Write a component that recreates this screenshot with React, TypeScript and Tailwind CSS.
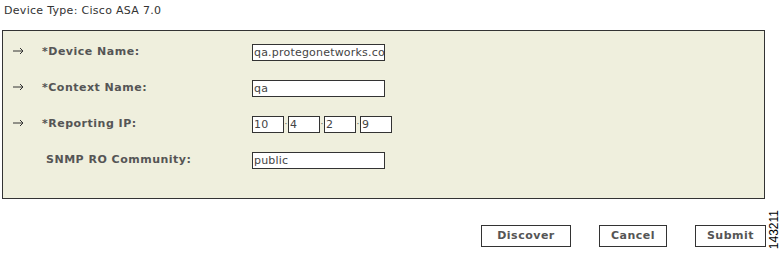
import React from "react";

const FONT = { fontFamily: '"DejaVu Sans", Verdana, sans-serif' };

function Arrow() {
  return (
    <svg width="11" height="8" viewBox="0 0 11 8" className="-mt-[3px]">
      <path d="M0 4H10M7 1L10 4L7 7" fill="none" stroke="#333" strokeWidth="1" />
    </svg>
  );
}

function Field({ value, w = "w-[133px]" }: { value: string; w?: string }) {
  return (
    <div
      className={`${w} h-[17px] border border-[#333] bg-white text-[11px] leading-[15px] pl-[1px] text-[#444] tracking-[0.2px] overflow-hidden whitespace-nowrap`}
    >
      {value}
    </div>
  );
}

function Row({
  arrow,
  label,
  children,
}: {
  arrow: boolean;
  label: string;
  children: React.ReactNode;
}) {
  return (
    <div className="flex items-center h-[17px]">
      <div className="w-[39px] pl-[10px] flex items-center">{arrow && <Arrow />}</div>
      <div
        className={`w-[210px] text-[11px] font-bold text-[#555] tracking-[0.5px] ${
          arrow ? "" : "pl-[4px]"
        }`}
      >
        {label}
      </div>
      {children}
    </div>
  );
}

export default function App() {
  const ip = ["10", "4", "2", "9"];
  return (
    <div className="relative w-[780px] h-[260px] bg-white" style={FONT}>
      <div className="pl-[4px] pt-[3px] h-[30px] text-[11px] text-[#333] tracking-[0.3px]">
        Device Type: Cisco ASA 7.0
      </div>

      <div className="ml-[2px] w-[763px] h-[169px] border border-[#333] bg-[#efefdd] pt-[13px] flex flex-col gap-[19px]">
        <Row arrow label="*Device Name:">
          <Field value="qa.protegonetworks.co" />
        </Row>
        <Row arrow label="*Context Name:">
          <Field value="qa" />
        </Row>
        <Row arrow label="*Reporting IP:">
          <div className="flex items-center">
            {ip.map((p, i) => (
              <div key={i} className="flex items-center">
                {i > 0 && (
                  <span className="w-[4px] text-center text-[9px] text-[#555]">·</span>
                )}
                <Field value={p} w="w-[32px]" />
              </div>
            ))}
          </div>
        </Row>
        <Row arrow={false} label="SNMP RO Community:">
          <Field value="public" />
        </Row>
      </div>

      <div className="flex mt-[26px] pl-[481px] gap-[28px]">
        {[
          ["Discover", "w-[90px]"],
          ["Cancel", "w-[68px]"],
          ["Submit", "w-[71px]"],
        ].map(([t, w]) => (
          <div
            key={t}
            className={`${w} h-[22px] border border-[#333] bg-white flex items-center justify-center text-[11px] font-bold text-[#555] tracking-[0.5px]`}
          >
            {t}
          </div>
        ))}
      </div>

      <div
        className="absolute left-[768px] top-[210px] text-[12px] text-black leading-[12px]"
        style={{
          fontFamily: '"Liberation Sans", Arial, sans-serif',
          writingMode: "vertical-rl",
          transform: "rotate(180deg)",
        }}
      >
        143211
      </div>
    </div>
  );
}
